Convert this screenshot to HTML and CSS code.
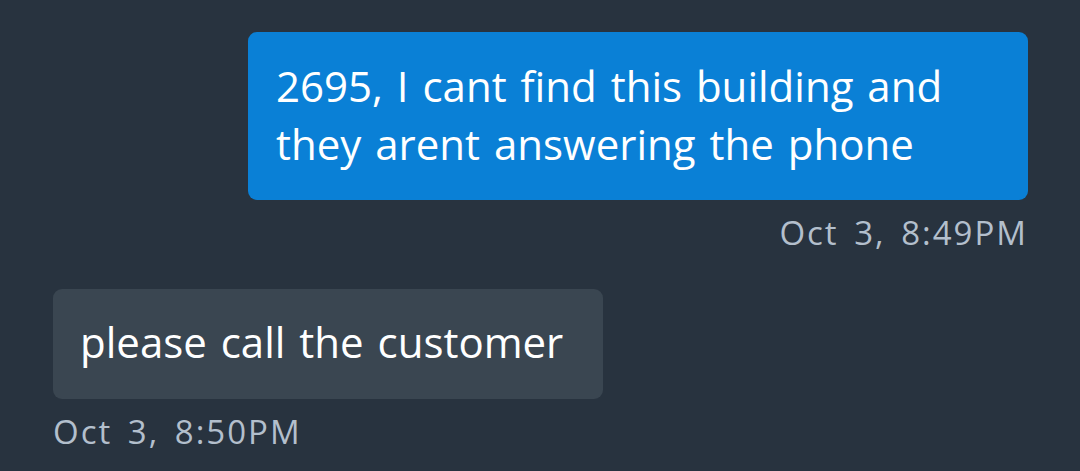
FILE: index.html
```html
<!DOCTYPE html>
<html>
<head>
<meta charset="utf-8">
<link rel="stylesheet" href="styles.css">
</head>
<body>
<div class="chat">
  <div class="msg out">
    <div class="bubble blue">2695, I cant find this building and<br>they arent answering the phone</div>
    <div class="time">Oct 3, 8:49PM</div>
  </div>
  <div class="msg in">
    <div class="bubble gray">please call the customer</div>
    <div class="time">Oct 3, 8:50PM</div>
  </div>
</div>
</body>
</html>
```
FILE: styles.css
```css
html, body {
  margin: 0;
  padding: 0;
  background: #28333f;
  height: 100%;
}
.chat {
  display: flex;
  flex-direction: column;
  padding: 32px 52px 0 53px;
  font-family: "Open Sans", sans-serif;
}
.msg {
  display: flex;
  flex-direction: column;
}
.msg.out {
  align-items: flex-end;
}
.msg.in {
  align-items: flex-start;
  margin-top: 36px;
}
.bubble {
  color: #ffffff;
  font-size: 42px;
  line-height: 58px;
  word-spacing: 3px;
  border-radius: 9px;
  box-sizing: border-box;
  white-space: nowrap;
}
.blue {
  background: #0a80d6;
  padding: 25px 28px 27px 28px;
  width: 780px;
}
.gray {
  background: #3a4651;
  padding: 24px 27px 28px 27px;
  width: 550px;
}
.time {
  color: #b3bfcc;
  font-size: 33px;
  line-height: 40px;
  letter-spacing: 2px;
  word-spacing: 5px;
  margin-top: 13px;
}
.msg.in .time {
  margin-top: 13px;
}
```
